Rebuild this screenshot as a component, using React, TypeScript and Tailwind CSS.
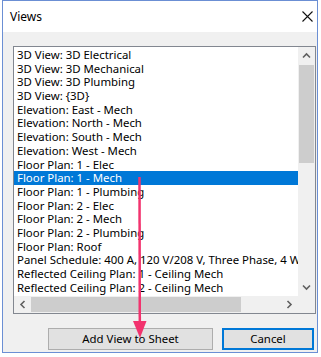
import React from "react";

const views = [
  "3D View: 3D Electrical",
  "3D View: 3D Mechanical",
  "3D View: 3D Plumbing",
  "3D View: {3D}",
  "Elevation: East - Mech",
  "Elevation: North - Mech",
  "Elevation: South - Mech",
  "Elevation: West - Mech",
  "Floor Plan: 1 - Elec",
  "Floor Plan: 1 - Mech",
  "Floor Plan: 1 - Plumbing",
  "Floor Plan: 2 - Elec",
  "Floor Plan: 2 - Mech",
  "Floor Plan: 2 - Plumbing",
  "Floor Plan: Roof",
  "Panel Schedule: 400 A, 120 V/208 V, Three Phase, 4 Wire",
  "Reflected Ceiling Plan: 1 - Ceiling Mech",
  "Reflected Ceiling Plan: 2 - Ceiling Mech",
];

const selected = "Floor Plan: 1 - Mech";

const Chevron = ({ dir }: { dir: "up" | "down" | "left" | "right" }) => {
  const rot = { up: 0, right: 90, down: 180, left: 270 }[dir];
  return (
    <svg width="9" height="9" viewBox="0 0 9 9" style={{ transform: `rotate(${rot}deg)` }}>
      <path d="M1 6.5 L4.5 3 L8 6.5" fill="none" stroke="#606060" strokeWidth="1.6" />
    </svg>
  );
};

export default function App() {
  return (
    <div
      className="relative w-[321px] h-[357px] bg-white overflow-hidden"
      style={{ fontFamily: '"Noto Sans", "Open Sans", sans-serif' }}
    >
      {/* dialog window */}
      <div className="ml-[2px] w-[316px] h-[353px] border border-[#6b8fd4] flex flex-col bg-[#f0f0f0]">
        {/* title bar */}
        <div className="h-[31px] bg-white flex items-center justify-between pl-[7px] pr-[4px] shrink-0">
          <span className="text-[12px] text-black">Views</span>
          <svg width="11" height="11" viewBox="0 0 11 11">
            <path d="M0.5 0.5 L10.5 10.5 M10.5 0.5 L0.5 10.5" stroke="#111" strokeWidth="1.1" />
          </svg>
        </div>

        {/* list box */}
        <div className="mt-[14px] ml-[10px] mr-[1px] h-[268px] border border-[#828790] bg-white flex flex-col">
          <div className="flex flex-1 min-h-0">
            <ul className="flex-1 min-w-0 overflow-hidden pt-[1px] text-[11.4px] leading-[13.7px] text-black">
              {views.map((v) => (
                <li
                  key={v}
                  className={
                    v === selected
                      ? "h-[13.7px] pl-[3px] whitespace-nowrap bg-[#0078d7] text-white"
                      : "h-[13.7px] pl-[3px] whitespace-nowrap"
                  }
                >
                  {v}
                </li>
              ))}
            </ul>
            {/* vertical scrollbar */}
            <div className="w-[17px] bg-[#f0f0f0] flex flex-col shrink-0">
              <div className="h-[17px] flex items-center justify-center">
                <Chevron dir="up" />
              </div>
              <div className="mx-[1px] mt-[1px] h-[98px] bg-[#cdcdcd]" />
              <div className="flex-1" />
              <div className="h-[17px] flex items-center justify-center">
                <Chevron dir="down" />
              </div>
            </div>
          </div>
          {/* horizontal scrollbar */}
          <div className="h-[17px] flex shrink-0">
            <div className="flex-1 bg-[#f0f0f0] flex items-center">
              <div className="w-[17px] h-[17px] flex items-center justify-center">
                <Chevron dir="left" />
              </div>
              <div className="w-[210px] h-[15px] bg-[#cdcdcd]" />
              <div className="flex-1" />
              <div className="w-[17px] h-[17px] flex items-center justify-center">
                <Chevron dir="right" />
              </div>
            </div>
            <div className="w-[17px] bg-[#f0f0f0]" />
          </div>
        </div>

        {/* buttons */}
        <div className="mt-[14px] flex justify-end gap-[9px] pr-[3px]">
          <button className="w-[165px] h-[22px] bg-[#e1e1e1] border border-[#adadad] text-[11.4px] text-black">
            Add View to Sheet
          </button>
          <button className="w-[92px] h-[22px] bg-[#e1e1e1] border-2 border-[#0078d7] text-[11.4px] text-black">
            Cancel
          </button>
        </div>
      </div>

      {/* annotation arrow */}
      <svg className="absolute left-0 top-0 pointer-events-none" width="321" height="357">
        <line x1="139.5" y1="177" x2="139.8" y2="324" stroke="#f2336e" strokeWidth="2.5" />
        <polygon points="133,321 146.5,321 140,338" fill="#f2336e" />
      </svg>
    </div>
  );
}
